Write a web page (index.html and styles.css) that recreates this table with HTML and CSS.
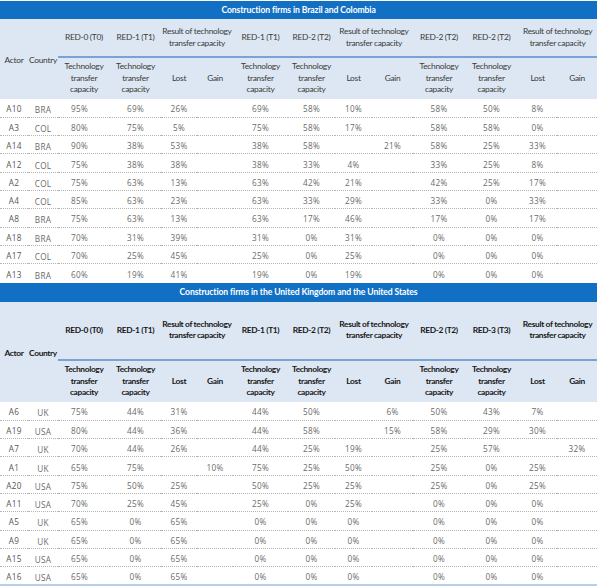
FILE: index.html
```html
<!DOCTYPE html>
<html>
<head>
<meta charset="utf-8">
<link rel="stylesheet" href="styles.css">
</head>
<body>
<table class="data t1">
  <colgroup>
    <col class="c-actor"><col class="c-country"><col class="c-r0"><col class="c-r1"><col class="c-l1"><col class="c-g1">
    <col class="c-r1b"><col class="c-r2"><col class="c-l2"><col class="c-g2"><col class="c-r2b"><col class="c-r3"><col class="c-l3"><col class="c-g3">
  </colgroup>
  <thead>
    <tr class="title"><th colspan="14">Construction firms in Brazil and Colombia</th></tr>
    <tr class="h1">
      <th rowspan="2" class="ac">Actor</th><th rowspan="2" class="ac">Country</th>
      <th class="ln">RED-0 (T0)</th><th class="ln">RED-1 (T1)</th><th class="ln" colspan="2">Result of technology<br>transfer capacity</th>
      <th class="ln">RED-1 (T1)</th><th class="ln">RED-2 (T2)</th><th class="ln" colspan="2">Result of technology<br>transfer capacity</th>
      <th class="ln">RED-2 (T2)</th><th class="ln">RED-2 (T2)</th><th class="ln" colspan="2">Result of technology<br>transfer capacity</th>
    </tr>
    <tr class="h2">
      <th>Technology<br>transfer<br>capacity</th><th>Technology<br>transfer<br>capacity</th><th>Lost</th><th>Gain</th>
      <th>Technology<br>transfer<br>capacity</th><th>Technology<br>transfer<br>capacity</th><th>Lost</th><th>Gain</th>
      <th>Technology<br>transfer<br>capacity</th><th>Technology<br>transfer<br>capacity</th><th>Lost</th><th>Gain</th>
    </tr>
  </thead>
  <tbody>
    <tr><td>A10</td><td class="cty">BRA</td><td>95%</td><td>69%</td><td>26%</td><td></td><td>69%</td><td>58%</td><td>10%</td><td></td><td>58%</td><td>50%</td><td>8%</td><td></td></tr>
    <tr><td>A3</td><td class="cty">COL</td><td>80%</td><td>75%</td><td>5%</td><td></td><td>75%</td><td>58%</td><td>17%</td><td></td><td>58%</td><td>58%</td><td>0%</td><td></td></tr>
    <tr><td>A14</td><td class="cty">BRA</td><td>90%</td><td>38%</td><td>53%</td><td></td><td>38%</td><td>58%</td><td></td><td>21%</td><td>58%</td><td>25%</td><td>33%</td><td></td></tr>
    <tr><td>A12</td><td class="cty">COL</td><td>75%</td><td>38%</td><td>38%</td><td></td><td>38%</td><td>33%</td><td>4%</td><td></td><td>33%</td><td>25%</td><td>8%</td><td></td></tr>
    <tr><td>A2</td><td class="cty">COL</td><td>75%</td><td>63%</td><td>13%</td><td></td><td>63%</td><td>42%</td><td>21%</td><td></td><td>42%</td><td>25%</td><td>17%</td><td></td></tr>
    <tr><td>A4</td><td class="cty">COL</td><td>85%</td><td>63%</td><td>23%</td><td></td><td>63%</td><td>33%</td><td>29%</td><td></td><td>33%</td><td>0%</td><td>33%</td><td></td></tr>
    <tr><td>A8</td><td class="cty">BRA</td><td>75%</td><td>63%</td><td>13%</td><td></td><td>63%</td><td>17%</td><td>46%</td><td></td><td>17%</td><td>0%</td><td>17%</td><td></td></tr>
    <tr><td>A18</td><td class="cty">BRA</td><td>70%</td><td>31%</td><td>39%</td><td></td><td>31%</td><td>0%</td><td>31%</td><td></td><td>0%</td><td>0%</td><td>0%</td><td></td></tr>
    <tr><td>A17</td><td class="cty">COL</td><td>70%</td><td>25%</td><td>45%</td><td></td><td>25%</td><td>0%</td><td>25%</td><td></td><td>0%</td><td>0%</td><td>0%</td><td></td></tr>
    <tr class="last"><td>A13</td><td class="cty">BRA</td><td>60%</td><td>19%</td><td>41%</td><td></td><td>19%</td><td>0%</td><td>19%</td><td></td><td>0%</td><td>0%</td><td>0%</td><td></td></tr>
  </tbody>
</table>

<table class="data t2">
  <colgroup>
    <col class="c-actor"><col class="c-country"><col class="c-r0"><col class="c-r1"><col class="c-l1"><col class="c-g1">
    <col class="c-r1b"><col class="c-r2"><col class="c-l2"><col class="c-g2"><col class="c-r2b"><col class="c-r3"><col class="c-l3"><col class="c-g3">
  </colgroup>
  <thead>
    <tr class="title"><th colspan="14">Construction firms in the United Kingdom and the United States</th></tr>
    <tr class="h1">
      <th rowspan="2" class="ac">Actor</th><th rowspan="2" class="ac">Country</th>
      <th class="ln">RED-0 (T0)</th><th class="ln">RED-1 (T1)</th><th class="ln" colspan="2">Result of technology<br>transfer capacity</th>
      <th class="ln">RED-1 (T1)</th><th class="ln">RED-2 (T2)</th><th class="ln" colspan="2">Result of technology<br>transfer capacity</th>
      <th class="ln">RED-2 (T2)</th><th class="ln">RED-3 (T3)</th><th class="ln" colspan="2">Result of technology<br>transfer capacity</th>
    </tr>
    <tr class="h2">
      <th>Technology<br>transfer<br>capacity</th><th>Technology<br>transfer<br>capacity</th><th>Lost</th><th>Gain</th>
      <th>Technology<br>transfer<br>capacity</th><th>Technology<br>transfer<br>capacity</th><th>Lost</th><th>Gain</th>
      <th>Technology<br>transfer<br>capacity</th><th>Technology<br>transfer<br>capacity</th><th>Lost</th><th>Gain</th>
    </tr>
  </thead>
  <tbody>
    <tr><td>A6</td><td class="cty">UK</td><td>75%</td><td>44%</td><td>31%</td><td></td><td>44%</td><td>50%</td><td></td><td>6%</td><td>50%</td><td>43%</td><td>7%</td><td></td></tr>
    <tr><td>A19</td><td class="cty">USA</td><td>80%</td><td>44%</td><td>36%</td><td></td><td>44%</td><td>58%</td><td></td><td>15%</td><td>58%</td><td>29%</td><td>30%</td><td></td></tr>
    <tr><td>A7</td><td class="cty">UK</td><td>70%</td><td>44%</td><td>26%</td><td></td><td>44%</td><td>25%</td><td>19%</td><td></td><td>25%</td><td>57%</td><td></td><td>32%</td></tr>
    <tr><td>A1</td><td class="cty">UK</td><td>65%</td><td>75%</td><td></td><td>10%</td><td>75%</td><td>25%</td><td>50%</td><td></td><td>25%</td><td>0%</td><td>25%</td><td></td></tr>
    <tr><td>A20</td><td class="cty">USA</td><td>75%</td><td>50%</td><td>25%</td><td></td><td>50%</td><td>25%</td><td>25%</td><td></td><td>25%</td><td>0%</td><td>25%</td><td></td></tr>
    <tr><td>A11</td><td class="cty">USA</td><td>70%</td><td>25%</td><td>45%</td><td></td><td>25%</td><td>0%</td><td>25%</td><td></td><td>0%</td><td>0%</td><td>0%</td><td></td></tr>
    <tr><td>A5</td><td class="cty">UK</td><td>65%</td><td>0%</td><td>65%</td><td></td><td>0%</td><td>0%</td><td>0%</td><td></td><td>0%</td><td>0%</td><td>0%</td><td></td></tr>
    <tr><td>A9</td><td class="cty">UK</td><td>65%</td><td>0%</td><td>65%</td><td></td><td>0%</td><td>0%</td><td>0%</td><td></td><td>0%</td><td>0%</td><td>0%</td><td></td></tr>
    <tr><td>A15</td><td class="cty">USA</td><td>65%</td><td>0%</td><td>65%</td><td></td><td>0%</td><td>0%</td><td>0%</td><td></td><td>0%</td><td>0%</td><td>0%</td><td></td></tr>
    <tr class="last"><td>A16</td><td class="cty">USA</td><td>65%</td><td>0%</td><td>65%</td><td></td><td>0%</td><td>0%</td><td>0%</td><td></td><td>0%</td><td>0%</td><td>0%</td><td></td></tr>
  </tbody>
</table>
</body>
</html>
```

FILE: styles.css
```css
html, body {
  margin: 0;
  padding: 0;
  background: #ffffff;
}
body {
  padding-top: 1px;
}
.data {
  width: 597px;
  table-layout: fixed;
  border-collapse: collapse;
  border-spacing: 0;
  font-family: "Lato", "Open Sans", sans-serif;
}
.t2 {
  margin-top: 1px;
}
.c-actor { width: 28px; }
.c-country { width: 30px; }
.c-r0 { width: 52px; }
.c-r1 { width: 51px; }
.c-l1 { width: 36px; }
.c-g1 { width: 36px; }
.c-r1b { width: 55px; }
.c-r2 { width: 47px; }
.c-l2 { width: 37px; }
.c-g2 { width: 41px; }
.c-r2b { width: 52px; }
.c-r3 { width: 53px; }
.c-l3 { width: 39px; }
.c-g3 { width: 40px; }

.data th, .data td {
  padding: 0;
  text-align: center;
  box-sizing: border-box;
  white-space: nowrap;
}
.title th {
  background: #1170c4;
  color: #ffffff;
  height: 18px;
  font-size: 8.6px;
  font-weight: 700;
  letter-spacing: -0.1px;
}
.t2 .title th {
  height: 19px;
}
.h1 th, .h2 th {
  background: #dde7f3;
  color: #3a3a3a;
  font-weight: 400;
  font-size: 8.4px;
  line-height: 11.7px;
  letter-spacing: -0.3px;
}
.t2 .h1 th, .t2 .h2 th {
  color: #161616;
  font-weight: 700;
  letter-spacing: -0.35px;
}
.h1 th {
  height: 38px;
}
.t2 .h1 th {
  height: 58px;
}
.h1 th.ln {
  border-bottom: 2px solid #7aa3d3;
}
.h1 th.ac {
  vertical-align: middle;
  padding-top: 3px;
}
.h2 th {
  height: 42px;
}
.data td {
  height: 18.3px;
  padding-top: 2px;
  font-family: "Open Sans", "Lato", sans-serif;
  font-size: 8.2px;
  color: #6a6a6a;
  border-bottom: 1px dotted #b4b4b4;
  letter-spacing: 0.25px;
}
.data tbody td:first-child {
  color: #555555;
}
.data td.cty {
  padding-top: 4px;
}
.data tbody td:nth-child(3) {
  padding-right: 9px;
}
.t1 tr.last td {
  border-bottom: none;
}
.t2 tr.last td {
  border-bottom: 2px solid #b9cfe6;
}
```
